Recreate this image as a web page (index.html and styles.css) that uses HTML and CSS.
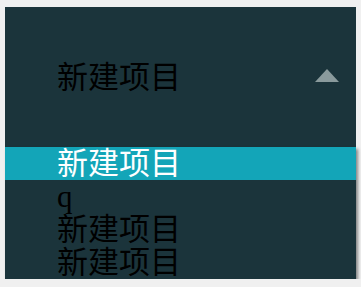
FILE: index.html
```html
<!DOCTYPE html>
<html>
<head>
<meta charset="utf-8">
<link rel="stylesheet" href="styles.css">
</head>
<body>
<div class="select">
  <div class="select-head">
    <span class="select-value">新建项目</span>
    <span class="caret"></span>
  </div>
  <ul class="options">
    <li class="option active">新建项目</li>
    <li class="option">q</li>
    <li class="option">新建项目</li>
    <li class="option">新建项目</li>
  </ul>
</div>
</body>
</html>
```

FILE: styles.css
```css
html, body {
  margin: 0;
  padding: 0;
  background: #f0f0f0;
}
body {
  padding: 7px 5px 0 5px;
  font-family: "Liberation Serif", "Noto Sans CJK SC", serif;
}
.select {
  width: 351px;
  background: #1b343b;
}
.select-head {
  height: 140px;
  display: flex;
  align-items: center;
  justify-content: space-between;
  padding: 0 17px 0 52px;
  box-sizing: border-box;
}
.select-value {
  font-size: 31px;
  line-height: 33px;
  color: #000;
}
.caret {
  width: 0;
  height: 0;
  border-left: 12px solid transparent;
  border-right: 12px solid transparent;
  border-bottom: 13px solid #8a9a9c;
  margin-top: -4px;
}
.options {
  list-style: none;
  margin: 0;
  padding: 0;
  background: #1b343b;
  box-shadow: 2px 2px 3px rgba(0, 0, 0, 0.45);
}
.option {
  height: 33px;
  line-height: 33px;
  font-size: 31px;
  padding-left: 52px;
  color: #000;
  white-space: nowrap;
}
.option.active {
  background: #13a5b8;
  color: #fff;
}
```
